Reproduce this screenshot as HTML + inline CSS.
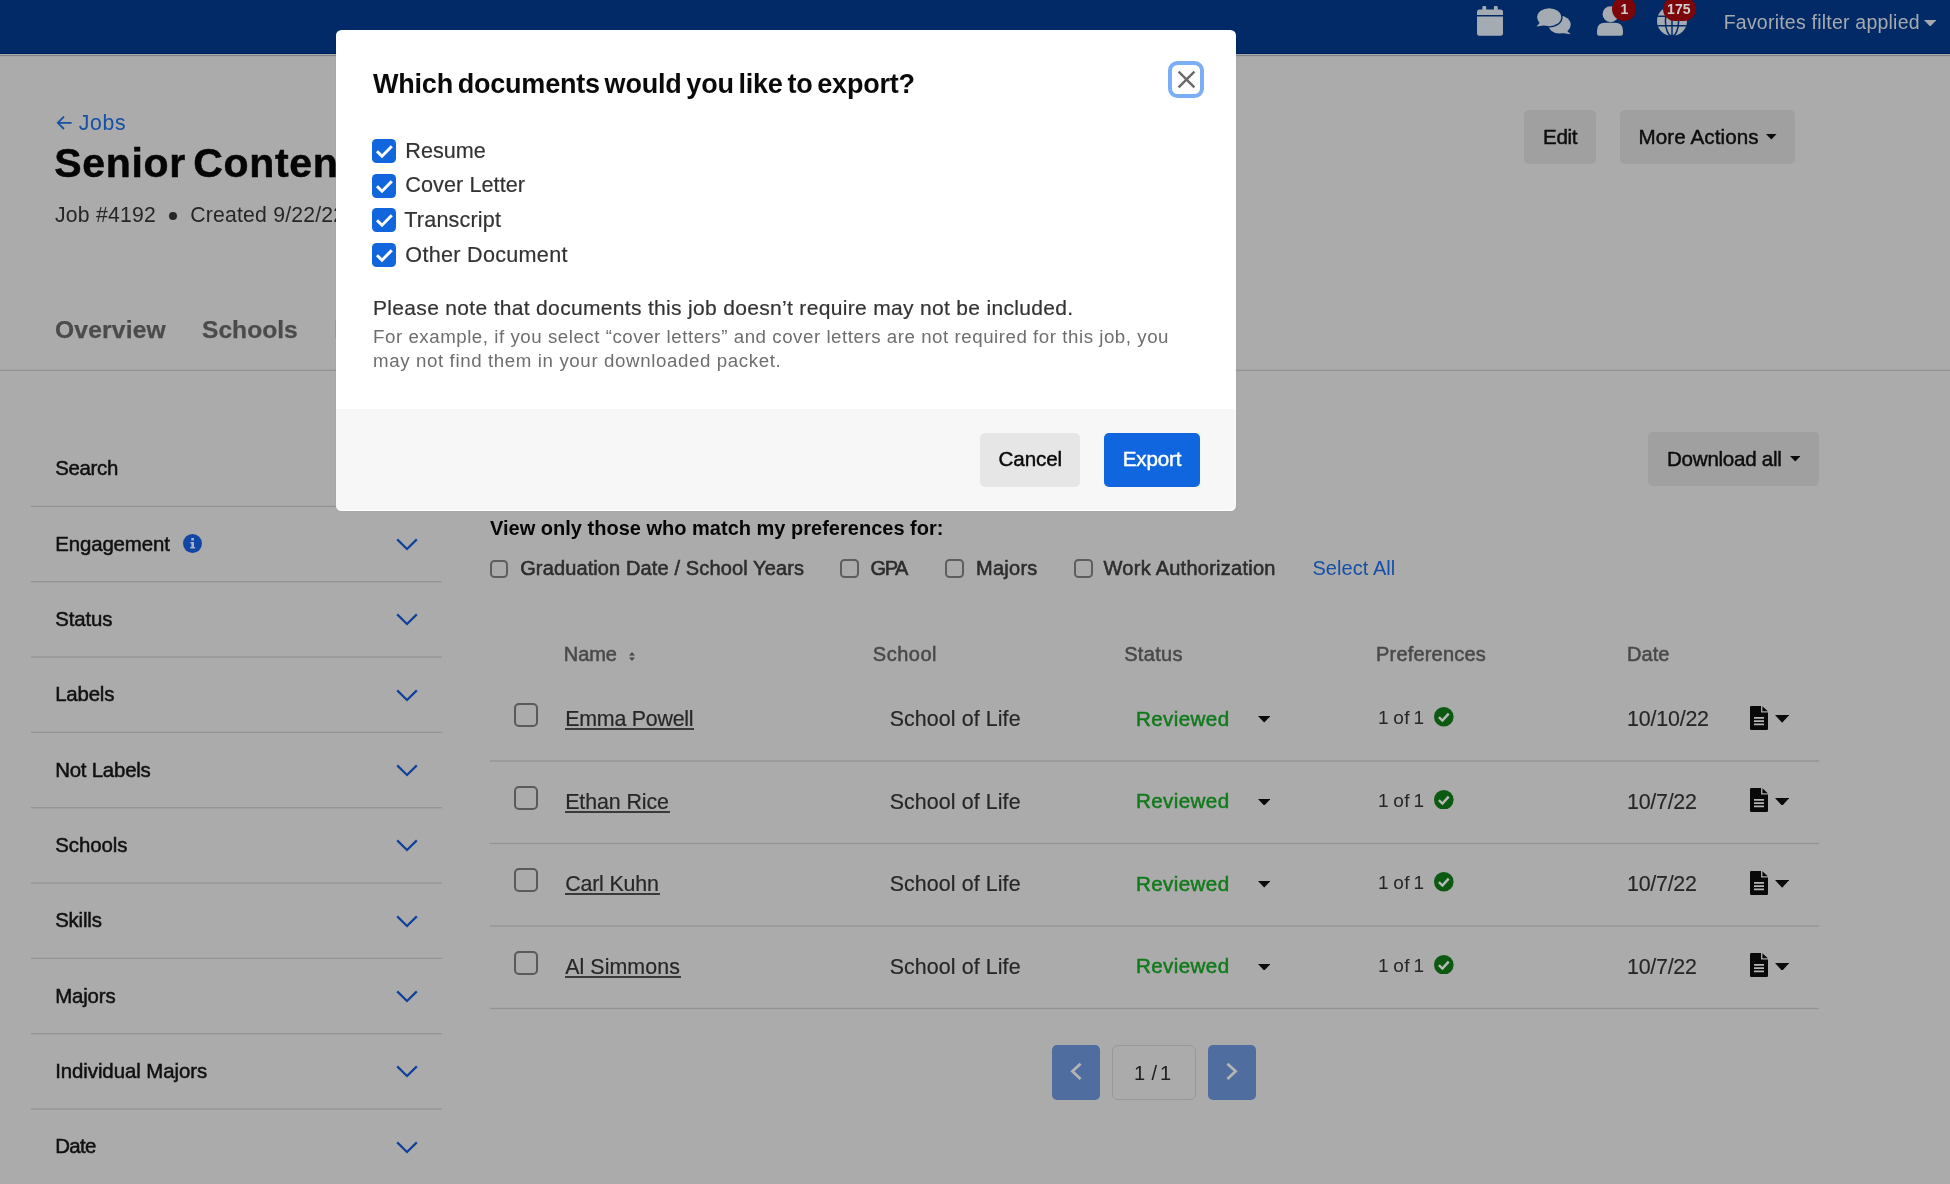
<!DOCTYPE html>
<html>
<head>
<meta charset="utf-8">
<title>Export documents</title>
<style>
*{box-sizing:border-box;margin:0;padding:0}
html,body{width:1950px;height:1184px;overflow:hidden;background:#ababab;font-family:"Liberation Sans",sans-serif;}
#root{position:absolute;left:0;top:0;width:1950px;height:1184px;will-change:transform;}
.t{position:absolute;white-space:nowrap;line-height:1;}
.a{position:absolute;}
#hdr{position:absolute;left:0;top:0;width:1950px;height:54px;background:#012a66;border-bottom:1px solid #001f5a;}
#hdrline{position:absolute;left:0;top:54px;width:1950px;height:3px;background:linear-gradient(#a6a8aa 0,#a6a8aa 1px,#7e8489 1px,#7e8489 2px,#a5a6a7 2px,#a5a6a7 3px);}
.hl{position:absolute;height:1px;background:#999;box-shadow:0 1px 0 #a6a6a6;}
.btn{position:absolute;background:#a0a0a0;border-radius:5px;}
.cb{position:absolute;width:24px;height:24px;border:2px solid #5a5a5a;border-radius:5px;}
.scb{position:absolute;width:19px;height:19px;top:559px;border:2px solid #5e5e5e;border-radius:4.5px;}
#modal{position:absolute;left:336px;top:30px;width:900px;height:481px;background:#fff;border-radius:5.5px;overflow:hidden;box-shadow:0 0 2px rgba(0,0,0,.07);}
#mfoot{position:absolute;left:0;top:379px;width:899px;height:101px;background:#f7f7f7;border-radius:0 0 5px 5px;}
.mcb{position:absolute;left:36px;width:24px;height:24px;background:#1166dd;border-radius:4.5px;}
.mcb svg{position:absolute;left:0;top:0;}
</style>
</head>
<body>
<div id="root">
<!-- header -->
<div id="hdr"></div><div id="hdrline"></div>
<svg class="a" style="left:1476px;top:5px" width="28" height="32" viewBox="0 0 28 32">
<rect x="6.4" y="1.1" width="3.8" height="6" rx="1" fill="#a4abb3"/><rect x="17.9" y="1.1" width="3.8" height="6" rx="1" fill="#a4abb3"/>
<path d="M1 7 q0 -2.5 2.5 -2.5 h21 q2.5 0 2.5 2.5 v3 h-26z" fill="#a4abb3"/>
<path d="M1 11.4 h26 v17 q0 2.4 -2.4 2.4 h-21.2 q-2.4 0 -2.4 -2.4z" fill="#a4abb3"/></svg>
<svg class="a" style="left:1536px;top:7px" width="36" height="28" viewBox="0 0 36 28">
<ellipse cx="23.5" cy="17.6" rx="11.2" ry="9" fill="#a4abb3"/>
<path d="M30 23 l4.8 4.2 l-9 -1.2z" fill="#a4abb3"/>
<ellipse cx="13.2" cy="10.2" rx="13.4" ry="10.2" fill="#012a66"/>
<ellipse cx="13.2" cy="10.2" rx="12" ry="9" fill="#a4abb3"/>
<path d="M4.4 15 l-3.8 4.6 l9 -1.4z" fill="#a4abb3"/></svg>
<svg class="a" style="left:1596px;top:5px" width="28" height="32" viewBox="0 0 28 32">
<circle cx="14.6" cy="9.2" r="8" fill="#a4abb3"/>
<path d="M1 28.6 v-2.8 q0 -8 8 -8 h10 q8 0 8 8 v2.8 q0 2.2 -2.2 2.2 h-21.6 q-2.2 0 -2.2 -2.2z" fill="#a4abb3"/></svg>
<svg class="a" style="left:1656px;top:5px" width="32" height="32" viewBox="0 0 32 32">
<circle cx="16" cy="16" r="15" fill="#a4abb3"/>
<g stroke="#012a66" stroke-width="1.5" fill="none"><ellipse cx="16" cy="16" rx="6.6" ry="15"/><line x1="16" y1="1" x2="16" y2="31"/><path d="M1.5 11.2 h29 M1.5 20.8 h29" /></g></svg>
<div class="a" style="left:1611.8px;top:-3px;width:24px;height:24px;border-radius:12px;background:#7b0509"></div>
<div class="a" style="left:1663.2px;top:-3px;width:32.6px;height:24px;border-radius:12px;background:#7b0509"></div>
<div class="t" style="left:1620.60px;top:2px;font-size:14px;color:#cfcfcf;font-weight:bold;">1</div>
<div class="t" style="left:1667.10px;top:2px;font-size:14px;color:#cfcfcf;letter-spacing:0.075px;font-weight:bold;">175</div>
<div class="t" style="left:1723.70px;top:13px;font-size:19.5px;color:#a6aaae;letter-spacing:0.224px;">Favorites filter applied</div>
<svg class="a" style="left:1923.7px;top:19.9px" width="12.4" height="6.5" viewBox="0 0 12.4 6.5"><path d="M0 0h12.4L6.2 6.5z" fill="#a6aaae"/></svg>
<!-- page -->
<svg class="a" style="left:56px;top:114px" width="17" height="17" viewBox="0 0 17 17"><path d="M15.6 8.8 H2 M8 2.6 L1.8 8.8 L8 15" fill="none" stroke="#1450a6" stroke-width="1.8"/></svg>
<div class="t" style="left:78.80px;top:112px;font-size:21.2px;color:#1450a6;letter-spacing:0.650px;">Jobs</div>
<div class="t" style="left:54.30px;top:143px;font-size:41px;color:#050505;letter-spacing:0.650px;word-spacing:-4.500px;font-weight:bold;-webkit-text-stroke:0.5px #050505;">Senior Content Strategist</div>
<div class="t" style="left:55.00px;top:204px;font-size:21.2px;color:#262626;letter-spacing:0.225px;">Job #4192</div>
<div class="a" style="left:169px;top:212px;width:8px;height:8px;border-radius:4px;background:#262626"></div>
<div class="t" style="left:190.30px;top:204px;font-size:21.2px;color:#262626;letter-spacing:0.200px;">Created 9/22/22</div>
<div class="t" style="left:55.00px;top:318px;font-size:24.6px;color:#4b4b4b;letter-spacing:0.186px;font-weight:bold;-webkit-text-stroke:0.25px #4b4b4b;">Overview</div>
<div class="t" style="left:202.00px;top:318px;font-size:24.6px;color:#4b4b4b;letter-spacing:0.008px;font-weight:bold;-webkit-text-stroke:0.25px #4b4b4b;">Schools</div>
<div class="t" style="left:335.00px;top:318px;font-size:24.6px;color:#4b4b4b;letter-spacing:0.400px;font-weight:bold;">Interviews</div>
<div class="a" style="left:335px;top:320px;width:1px;height:18px;background:#9c9c9c"></div>
<div class="a" style="left:0px;top:369px;width:1950px;height:1px;background:#a3a3a3"></div>
<div class="a" style="left:0px;top:370px;width:1950px;height:1px;background:#949494"></div>
<div class="btn" style="left:1524px;top:110px;width:72px;height:54px"></div>
<div class="t" style="left:1543.00px;top:127px;font-size:20.6px;color:#0d0d0d;letter-spacing:-0.300px;-webkit-text-stroke:0.45px #0d0d0d;">Edit</div>
<div class="btn" style="left:1620px;top:110px;width:175px;height:54px"></div>
<div class="t" style="left:1638.60px;top:127px;font-size:20.6px;color:#0d0d0d;letter-spacing:0.082px;-webkit-text-stroke:0.45px #0d0d0d;">More Actions</div>
<svg class="a" style="left:1766px;top:134px" width="10.6" height="5.6" viewBox="0 0 10.6 5.6"><path d="M0 0h10.6L5.3 5.6z" fill="#0b0b0b"/></svg>
<div class="btn" style="left:1648px;top:432px;width:171px;height:53.5px"></div>
<div class="t" style="left:1667.00px;top:449px;font-size:20.6px;color:#0d0d0d;letter-spacing:-0.273px;-webkit-text-stroke:0.45px #0d0d0d;">Download all</div>
<svg class="a" style="left:1789.7px;top:456px" width="10.6" height="5.6" viewBox="0 0 10.6 5.6"><path d="M0 0h10.6L5.3 5.6z" fill="#0b0b0b"/></svg>
<div class="t" style="left:55.20px;top:458px;font-size:20.4px;color:#101010;letter-spacing:-0.290px;-webkit-text-stroke:0.5px #101010;">Search</div>
<div class="a" style="left:31px;top:505px;width:411px;height:1px;background:#a5a5a5"></div>
<div class="a" style="left:31px;top:506px;width:411px;height:1px;background:#939393"></div>
<div class="a" style="left:31px;top:507px;width:411px;height:1px;background:#aaaaaa"></div>
<div class="t" style="left:55.20px;top:534px;font-size:20.4px;color:#101010;letter-spacing:-0.106px;-webkit-text-stroke:0.5px #101010;">Engagement</div>
<svg class="a" style="left:396.4px;top:537.9300000000001px" width="22" height="13" viewBox="0 0 22 13"><path d="M1.2 1.4 L11 11 L20.8 1.4" fill="none" stroke="#0f419a" stroke-width="2.2"/></svg>
<div class="a" style="left:31px;top:581px;width:411px;height:1px;background:#959595"></div>
<div class="a" style="left:31px;top:582px;width:411px;height:1px;background:#a2a2a2"></div>
<div class="t" style="left:55.20px;top:609px;font-size:20.4px;color:#101010;letter-spacing:-0.120px;-webkit-text-stroke:0.5px #101010;">Status</div>
<svg class="a" style="left:396.4px;top:613.26px" width="22" height="13" viewBox="0 0 22 13"><path d="M1.2 1.4 L11 11 L20.8 1.4" fill="none" stroke="#0f419a" stroke-width="2.2"/></svg>
<div class="a" style="left:31px;top:656px;width:411px;height:1px;background:#9d9d9d"></div>
<div class="a" style="left:31px;top:657px;width:411px;height:1px;background:#9a9a9a"></div>
<div class="t" style="left:55.20px;top:684px;font-size:20.4px;color:#101010;letter-spacing:-0.190px;-webkit-text-stroke:0.5px #101010;">Labels</div>
<svg class="a" style="left:396.4px;top:688.59px" width="22" height="13" viewBox="0 0 22 13"><path d="M1.2 1.4 L11 11 L20.8 1.4" fill="none" stroke="#0f419a" stroke-width="2.2"/></svg>
<div class="a" style="left:31px;top:731px;width:411px;height:1px;background:#a5a5a5"></div>
<div class="a" style="left:31px;top:732px;width:411px;height:1px;background:#939393"></div>
<div class="t" style="left:55.20px;top:760px;font-size:20.4px;color:#101010;letter-spacing:-0.211px;-webkit-text-stroke:0.5px #101010;">Not Labels</div>
<svg class="a" style="left:396.4px;top:763.92px" width="22" height="13" viewBox="0 0 22 13"><path d="M1.2 1.4 L11 11 L20.8 1.4" fill="none" stroke="#0f419a" stroke-width="2.2"/></svg>
<div class="a" style="left:31px;top:807px;width:411px;height:1px;background:#959595"></div>
<div class="a" style="left:31px;top:808px;width:411px;height:1px;background:#a2a2a2"></div>
<div class="t" style="left:55.20px;top:835px;font-size:20.4px;color:#101010;letter-spacing:-0.042px;-webkit-text-stroke:0.5px #101010;">Schools</div>
<svg class="a" style="left:396.4px;top:839.25px" width="22" height="13" viewBox="0 0 22 13"><path d="M1.2 1.4 L11 11 L20.8 1.4" fill="none" stroke="#0f419a" stroke-width="2.2"/></svg>
<div class="a" style="left:31px;top:882px;width:411px;height:1px;background:#9d9d9d"></div>
<div class="a" style="left:31px;top:883px;width:411px;height:1px;background:#9a9a9a"></div>
<div class="t" style="left:55.20px;top:910px;font-size:20.4px;color:#101010;letter-spacing:-0.180px;-webkit-text-stroke:0.5px #101010;">Skills</div>
<svg class="a" style="left:396.4px;top:914.58px" width="22" height="13" viewBox="0 0 22 13"><path d="M1.2 1.4 L11 11 L20.8 1.4" fill="none" stroke="#0f419a" stroke-width="2.2"/></svg>
<div class="a" style="left:31px;top:957px;width:411px;height:1px;background:#a5a5a5"></div>
<div class="a" style="left:31px;top:958px;width:411px;height:1px;background:#939393"></div>
<div class="t" style="left:55.20px;top:986px;font-size:20.4px;color:#101010;letter-spacing:-0.150px;-webkit-text-stroke:0.5px #101010;">Majors</div>
<svg class="a" style="left:396.4px;top:989.91px" width="22" height="13" viewBox="0 0 22 13"><path d="M1.2 1.4 L11 11 L20.8 1.4" fill="none" stroke="#0f419a" stroke-width="2.2"/></svg>
<div class="a" style="left:31px;top:1033px;width:411px;height:1px;background:#949494"></div>
<div class="a" style="left:31px;top:1034px;width:411px;height:1px;background:#a2a2a2"></div>
<div class="t" style="left:55.20px;top:1061px;font-size:20.4px;color:#101010;letter-spacing:-0.069px;-webkit-text-stroke:0.5px #101010;">Individual Majors</div>
<svg class="a" style="left:396.4px;top:1065.24px" width="22" height="13" viewBox="0 0 22 13"><path d="M1.2 1.4 L11 11 L20.8 1.4" fill="none" stroke="#0f419a" stroke-width="2.2"/></svg>
<div class="a" style="left:31px;top:1108px;width:411px;height:1px;background:#9c9c9c"></div>
<div class="a" style="left:31px;top:1109px;width:411px;height:1px;background:#9a9a9a"></div>
<div class="t" style="left:55.20px;top:1136px;font-size:20.4px;color:#101010;letter-spacing:-0.633px;-webkit-text-stroke:0.5px #101010;">Date</div>
<svg class="a" style="left:396.4px;top:1140.5700000000002px" width="22" height="13" viewBox="0 0 22 13"><path d="M1.2 1.4 L11 11 L20.8 1.4" fill="none" stroke="#0f419a" stroke-width="2.2"/></svg>
<svg class="a" style="left:182.5px;top:533.5px" width="19" height="19" viewBox="0 0 19 19"><circle cx="9.5" cy="9.5" r="9.5" fill="#1246a4"/><path d="M8.3 4.1h2.6v2.5H8.3z M7.4 8h3.6v5h1.1v1.6H7.2V13h1.2V9.6H7.4z" fill="#a9b4c6"/></svg>
<!-- table -->
<div class="t" style="left:490.00px;top:518px;font-size:20px;color:#060606;letter-spacing:0.008px;font-weight:bold;">View only those who match my preferences for:</div>
<div class="scb" style="left:490px;width:18px;height:18px;top:560px"></div>
<div class="scb" style="left:840px"></div>
<div class="scb" style="left:945px"></div>
<div class="scb" style="left:1073.5px"></div>
<div class="t" style="left:520.20px;top:558px;font-size:20px;color:#2d2d2d;letter-spacing:0.122px;-webkit-text-stroke:0.55px #2d2d2d;">Graduation Date / School Years</div>
<div class="t" style="left:870.60px;top:558px;font-size:20px;color:#2d2d2d;letter-spacing:-1.500px;-webkit-text-stroke:0.55px #2d2d2d;">GPA</div>
<div class="t" style="left:976.00px;top:558px;font-size:20px;color:#2d2d2d;letter-spacing:0.260px;-webkit-text-stroke:0.55px #2d2d2d;">Majors</div>
<div class="t" style="left:1103.60px;top:558px;font-size:20px;color:#2d2d2d;letter-spacing:0.259px;-webkit-text-stroke:0.55px #2d2d2d;">Work Authorization</div>
<div class="t" style="left:1312.40px;top:558px;font-size:20px;color:#1450a6;letter-spacing:0.072px;">Select All</div>
<div class="t" style="left:563.80px;top:644px;font-size:20px;color:#494949;letter-spacing:-0.083px;-webkit-text-stroke:0.5px #494949;">Name</div>
<div class="t" style="left:872.80px;top:644px;font-size:20px;color:#494949;letter-spacing:0.510px;-webkit-text-stroke:0.5px #494949;">School</div>
<div class="t" style="left:1124.20px;top:644px;font-size:20px;color:#494949;letter-spacing:0.310px;-webkit-text-stroke:0.5px #494949;">Status</div>
<div class="t" style="left:1376.10px;top:644px;font-size:20px;color:#494949;letter-spacing:0.175px;-webkit-text-stroke:0.5px #494949;">Preferences</div>
<div class="t" style="left:1627.10px;top:644px;font-size:20px;color:#494949;letter-spacing:-0.017px;-webkit-text-stroke:0.5px #494949;">Date</div>
<svg class="a" style="left:628.7px;top:651.6px" width="6" height="9" viewBox="0 0 6 9"><path d="M0 3.6L3 0L6 3.6z M0 5.4L3 9L6 5.4z" fill="#4a4a4a"/></svg>
<div class="cb" style="left:514px;top:703px"></div>
<div class="t" style="left:565.20px;top:709px;font-size:21.4px;color:#272727;letter-spacing:-0.235px;-webkit-text-stroke:0.2px #272727;">Emma Powell</div>
<div class="a" style="left:565px;top:728px;width:129.1px;height:2px;background:#3a3a3a"></div>
<div class="t" style="left:889.70px;top:709px;font-size:21.4px;color:#272727;letter-spacing:0.096px;-webkit-text-stroke:0.2px #272727;">School of Life</div>
<div class="t" style="left:1136.00px;top:709px;font-size:20.6px;color:#117a1b;letter-spacing:0.386px;-webkit-text-stroke:0.5px #117a1b;">Reviewed</div>
<svg class="a" style="left:1258px;top:716.2px" width="12.4" height="6.6" viewBox="0 0 12.4 6.6"><path d="M0 0h12.4L6.2 6.6z" fill="#0b0b0b"/></svg>
<div class="t" style="left:1378.10px;top:708px;font-size:19px;color:#262626;">1</div>
<div class="t" style="left:1393.30px;top:708px;font-size:19px;color:#262626;letter-spacing:0.400px;">of</div>
<div class="t" style="left:1413.50px;top:708px;font-size:19px;color:#262626;">1</div>
<svg class="a" style="left:1434.2px;top:707.0px" width="19.6" height="19.6" viewBox="0 0 20 20"><circle cx="10" cy="10" r="10" fill="#0c5a12"/><path d="M5 10.4 L8.6 13.8 L15 6.8" fill="none" stroke="#b9b9b9" stroke-width="2.5"/></svg>
<div class="t" style="left:1627.00px;top:709px;font-size:21.4px;color:#262626;letter-spacing:-0.179px;-webkit-text-stroke:0.15px #262626;">10/10/22</div>
<svg class="a" style="left:1750px;top:705.8px" width="18" height="24" viewBox="0 0 18 24"><path d="M1.2 0 H11 V6.4 H18 V22.8 Q18 24 16.8 24 H1.2 Q0 24 0 22.8 V1.2 Q0 0 1.2 0z M12.4 0.2 L17.8 5.2 H12.4z" fill="#090909"/><path d="M4 11h10v1.7H4z M4 14.3h10v1.7H4z M4 17.6h10v1.7H4z" fill="#b5b5b5"/></svg>
<svg class="a" style="left:1774.5px;top:715.2px" width="14.3" height="7.8" viewBox="0 0 14.3 7.8"><path d="M0 0h14.3L7.15 7.8z" fill="#0b0b0b"/></svg>
<div class="a" style="left:490px;top:760px;width:1329px;height:1px;background:#9b9b9b"></div>
<div class="a" style="left:490px;top:761px;width:1329px;height:1px;background:#9b9b9b"></div>
<div class="cb" style="left:514px;top:786px"></div>
<div class="t" style="left:565.20px;top:792px;font-size:21.4px;color:#272727;letter-spacing:-0.106px;-webkit-text-stroke:0.2px #272727;">Ethan Rice</div>
<div class="a" style="left:565px;top:811px;width:104.5px;height:2px;background:#3a3a3a"></div>
<div class="t" style="left:889.70px;top:792px;font-size:21.4px;color:#272727;letter-spacing:0.096px;-webkit-text-stroke:0.2px #272727;">School of Life</div>
<div class="t" style="left:1136.00px;top:791px;font-size:20.6px;color:#117a1b;letter-spacing:0.386px;-webkit-text-stroke:0.5px #117a1b;">Reviewed</div>
<svg class="a" style="left:1258px;top:798.7px" width="12.4" height="6.6" viewBox="0 0 12.4 6.6"><path d="M0 0h12.4L6.2 6.6z" fill="#0b0b0b"/></svg>
<div class="t" style="left:1378.10px;top:791px;font-size:19px;color:#262626;">1</div>
<div class="t" style="left:1393.30px;top:791px;font-size:19px;color:#262626;letter-spacing:0.400px;">of</div>
<div class="t" style="left:1413.50px;top:791px;font-size:19px;color:#262626;">1</div>
<svg class="a" style="left:1434.2px;top:789.5px" width="19.6" height="19.6" viewBox="0 0 20 20"><circle cx="10" cy="10" r="10" fill="#0c5a12"/><path d="M5 10.4 L8.6 13.8 L15 6.8" fill="none" stroke="#b9b9b9" stroke-width="2.5"/></svg>
<div class="t" style="left:1627.00px;top:792px;font-size:21.4px;color:#262626;letter-spacing:-0.250px;-webkit-text-stroke:0.15px #262626;">10/7/22</div>
<svg class="a" style="left:1750px;top:788.3px" width="18" height="24" viewBox="0 0 18 24"><path d="M1.2 0 H11 V6.4 H18 V22.8 Q18 24 16.8 24 H1.2 Q0 24 0 22.8 V1.2 Q0 0 1.2 0z M12.4 0.2 L17.8 5.2 H12.4z" fill="#090909"/><path d="M4 11h10v1.7H4z M4 14.3h10v1.7H4z M4 17.6h10v1.7H4z" fill="#b5b5b5"/></svg>
<svg class="a" style="left:1774.5px;top:797.7px" width="14.3" height="7.8" viewBox="0 0 14.3 7.8"><path d="M0 0h14.3L7.15 7.8z" fill="#0b0b0b"/></svg>
<div class="a" style="left:490px;top:842px;width:1329px;height:1px;background:#a7a7a7"></div>
<div class="a" style="left:490px;top:843px;width:1329px;height:1px;background:#939393"></div>
<div class="a" style="left:490px;top:844px;width:1329px;height:1px;background:#a7a7a7"></div>
<div class="cb" style="left:514px;top:868px"></div>
<div class="t" style="left:565.20px;top:874px;font-size:21.4px;color:#272727;letter-spacing:-0.181px;-webkit-text-stroke:0.2px #272727;">Carl Kuhn</div>
<div class="a" style="left:565px;top:893px;width:94.5px;height:2px;background:#3a3a3a"></div>
<div class="t" style="left:889.70px;top:874px;font-size:21.4px;color:#272727;letter-spacing:0.096px;-webkit-text-stroke:0.2px #272727;">School of Life</div>
<div class="t" style="left:1136.00px;top:874px;font-size:20.6px;color:#117a1b;letter-spacing:0.386px;-webkit-text-stroke:0.5px #117a1b;">Reviewed</div>
<svg class="a" style="left:1258px;top:881.2px" width="12.4" height="6.6" viewBox="0 0 12.4 6.6"><path d="M0 0h12.4L6.2 6.6z" fill="#0b0b0b"/></svg>
<div class="t" style="left:1378.10px;top:873px;font-size:19px;color:#262626;">1</div>
<div class="t" style="left:1393.30px;top:873px;font-size:19px;color:#262626;letter-spacing:0.400px;">of</div>
<div class="t" style="left:1413.50px;top:873px;font-size:19px;color:#262626;">1</div>
<svg class="a" style="left:1434.2px;top:872.0px" width="19.6" height="19.6" viewBox="0 0 20 20"><circle cx="10" cy="10" r="10" fill="#0c5a12"/><path d="M5 10.4 L8.6 13.8 L15 6.8" fill="none" stroke="#b9b9b9" stroke-width="2.5"/></svg>
<div class="t" style="left:1627.00px;top:874px;font-size:21.4px;color:#262626;letter-spacing:-0.250px;-webkit-text-stroke:0.15px #262626;">10/7/22</div>
<svg class="a" style="left:1750px;top:870.8px" width="18" height="24" viewBox="0 0 18 24"><path d="M1.2 0 H11 V6.4 H18 V22.8 Q18 24 16.8 24 H1.2 Q0 24 0 22.8 V1.2 Q0 0 1.2 0z M12.4 0.2 L17.8 5.2 H12.4z" fill="#090909"/><path d="M4 11h10v1.7H4z M4 14.3h10v1.7H4z M4 17.6h10v1.7H4z" fill="#b5b5b5"/></svg>
<svg class="a" style="left:1774.5px;top:880.2px" width="14.3" height="7.8" viewBox="0 0 14.3 7.8"><path d="M0 0h14.3L7.15 7.8z" fill="#0b0b0b"/></svg>
<div class="a" style="left:490px;top:925px;width:1329px;height:1px;background:#9b9b9b"></div>
<div class="a" style="left:490px;top:926px;width:1329px;height:1px;background:#9b9b9b"></div>
<div class="cb" style="left:514px;top:951px"></div>
<div class="t" style="left:565.20px;top:957px;font-size:21.4px;color:#272727;letter-spacing:0.061px;-webkit-text-stroke:0.2px #272727;">Al Simmons</div>
<div class="a" style="left:565px;top:976px;width:115.5px;height:2px;background:#3a3a3a"></div>
<div class="t" style="left:889.70px;top:957px;font-size:21.4px;color:#272727;letter-spacing:0.096px;-webkit-text-stroke:0.2px #272727;">School of Life</div>
<div class="t" style="left:1136.00px;top:956px;font-size:20.6px;color:#117a1b;letter-spacing:0.386px;-webkit-text-stroke:0.5px #117a1b;">Reviewed</div>
<svg class="a" style="left:1258px;top:963.7px" width="12.4" height="6.6" viewBox="0 0 12.4 6.6"><path d="M0 0h12.4L6.2 6.6z" fill="#0b0b0b"/></svg>
<div class="t" style="left:1378.10px;top:956px;font-size:19px;color:#262626;">1</div>
<div class="t" style="left:1393.30px;top:956px;font-size:19px;color:#262626;letter-spacing:0.400px;">of</div>
<div class="t" style="left:1413.50px;top:956px;font-size:19px;color:#262626;">1</div>
<svg class="a" style="left:1434.2px;top:954.5px" width="19.6" height="19.6" viewBox="0 0 20 20"><circle cx="10" cy="10" r="10" fill="#0c5a12"/><path d="M5 10.4 L8.6 13.8 L15 6.8" fill="none" stroke="#b9b9b9" stroke-width="2.5"/></svg>
<div class="t" style="left:1627.00px;top:957px;font-size:21.4px;color:#262626;letter-spacing:-0.250px;-webkit-text-stroke:0.15px #262626;">10/7/22</div>
<svg class="a" style="left:1750px;top:953.3px" width="18" height="24" viewBox="0 0 18 24"><path d="M1.2 0 H11 V6.4 H18 V22.8 Q18 24 16.8 24 H1.2 Q0 24 0 22.8 V1.2 Q0 0 1.2 0z M12.4 0.2 L17.8 5.2 H12.4z" fill="#090909"/><path d="M4 11h10v1.7H4z M4 14.3h10v1.7H4z M4 17.6h10v1.7H4z" fill="#b5b5b5"/></svg>
<svg class="a" style="left:1774.5px;top:962.7px" width="14.3" height="7.8" viewBox="0 0 14.3 7.8"><path d="M0 0h14.3L7.15 7.8z" fill="#0b0b0b"/></svg>
<div class="a" style="left:490px;top:1007px;width:1329px;height:1px;background:#a7a7a7"></div>
<div class="a" style="left:490px;top:1008px;width:1329px;height:1px;background:#939393"></div>
<div class="a" style="left:490px;top:1009px;width:1329px;height:1px;background:#a7a7a7"></div>
<div class="a" style="left:1052px;top:1045px;width:48px;height:55px;border-radius:5px;background:#4f6d9f"></div>
<div class="a" style="left:1208px;top:1045px;width:48px;height:55px;border-radius:5px;background:#4f6d9f"></div>
<div class="a" style="left:1112px;top:1045px;width:84px;height:55px;border-radius:6px;border:1.5px solid #989898"></div>
<svg class="a" style="left:1069px;top:1062px" width="14" height="19" viewBox="0 0 14 19"><path d="M11.6 1.8 L3.4 9.3 L11.6 17" fill="none" stroke="#b4b4b4" stroke-width="2.8"/></svg>
<svg class="a" style="left:1225px;top:1062px" width="14" height="19" viewBox="0 0 14 19"><path d="M2.4 1.8 L10.6 9.3 L2.4 17" fill="none" stroke="#b4b4b4" stroke-width="2.8"/></svg>
<div class="t" style="left:1133.95px;top:1063px;font-size:20px;color:#1d1d1d;">1</div>
<div class="t" style="left:1151.50px;top:1063px;font-size:20px;color:#1d1d1d;">/</div>
<div class="t" style="left:1159.95px;top:1063px;font-size:20px;color:#1d1d1d;">1</div>
<!-- modal -->
<div id="modal">
<div id="mfoot"></div>
<div class="t" style="left:37.00px;top:41px;font-size:27px;color:#0a0a0a;letter-spacing:-0.212px;word-spacing:-2.500px;font-weight:bold;">Which documents would you like to export?</div>
<div class="a" style="left:832.4000000000001px;top:31.4px;width:36px;height:37px;border:4.2px solid #7aaef6;border-radius:9.5px;background:#fff"></div>
<svg class="a" style="left:841px;top:40px" width="19" height="19" viewBox="0 0 19 19"><path d="M1.6 1.6 L17.4 17.4 M17.4 1.6 L1.6 17.4" fill="none" stroke="#6b6b6b" stroke-width="2.4"/></svg>
<div class="mcb" style="top:108.9px"><svg width="24" height="24" viewBox="0 0 24 24"><path d="M5 12.2 L10 17.2 L19.8 7.2" fill="none" stroke="#fff" stroke-width="3"/></svg></div>
<div class="t" style="left:69.30px;top:110px;font-size:21.6px;color:#333;letter-spacing:-0.010px;-webkit-text-stroke:0.2px #333;">Resume</div>
<div class="mcb" style="top:143.6px"><svg width="24" height="24" viewBox="0 0 24 24"><path d="M5 12.2 L10 17.2 L19.8 7.2" fill="none" stroke="#fff" stroke-width="3"/></svg></div>
<div class="t" style="left:69.30px;top:144px;font-size:21.6px;color:#333;letter-spacing:0.086px;-webkit-text-stroke:0.2px #333;">Cover Letter</div>
<div class="mcb" style="top:178.3px"><svg width="24" height="24" viewBox="0 0 24 24"><path d="M5 12.2 L10 17.2 L19.8 7.2" fill="none" stroke="#fff" stroke-width="3"/></svg></div>
<div class="t" style="left:68.30px;top:179px;font-size:21.6px;color:#333;letter-spacing:0.167px;-webkit-text-stroke:0.2px #333;">Transcript</div>
<div class="mcb" style="top:213.0px"><svg width="24" height="24" viewBox="0 0 24 24"><path d="M5 12.2 L10 17.2 L19.8 7.2" fill="none" stroke="#fff" stroke-width="3"/></svg></div>
<div class="t" style="left:69.30px;top:214px;font-size:21.6px;color:#333;letter-spacing:0.285px;-webkit-text-stroke:0.2px #333;">Other Document</div>
<div class="t" style="left:37.00px;top:267px;font-size:21px;color:#333;letter-spacing:0.324px;-webkit-text-stroke:0.2px #333;">Please note that documents this job doesn’t require may not be included.</div>
<div class="t" style="left:37.00px;top:298px;font-size:18.7px;color:#6e6e6e;letter-spacing:0.540px;">For example, if you select “cover letters” and cover letters are not required for this job, you</div>
<div class="t" style="left:37.00px;top:322px;font-size:18.7px;color:#6e6e6e;letter-spacing:0.616px;">may not find them in your downloaded packet.</div>
<div class="a" style="left:644px;top:403px;width:100px;height:54px;border-radius:5px;background:#e6e6e6"></div>
<div class="t" style="left:662.50px;top:419px;font-size:20.6px;color:#0a0a0a;letter-spacing:-0.100px;-webkit-text-stroke:0.45px #0a0a0a;">Cancel</div>
<div class="a" style="left:768px;top:403px;width:96px;height:54px;border-radius:5px;background:#1066de"></div>
<div class="t" style="left:786.70px;top:419px;font-size:20.6px;color:#fff;letter-spacing:-0.140px;-webkit-text-stroke:0.45px #fff;">Export</div>
</div>
</div>
</body>
</html>
